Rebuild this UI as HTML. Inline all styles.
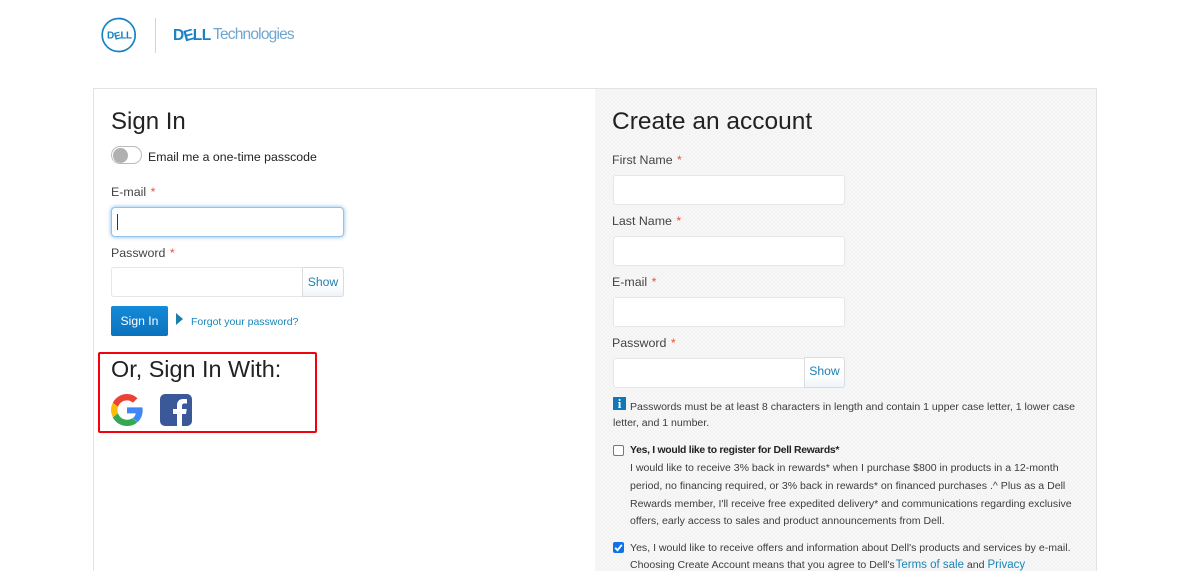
<!DOCTYPE html>
<html><head><meta charset="utf-8"><style>
html,body{margin:0;padding:0;background:#fff;width:1182px;height:571px;overflow:hidden}
body{position:relative;font-family:"Liberation Sans",sans-serif;color:#444}
.a{position:absolute;white-space:nowrap}
.h{font-size:24.5px;color:#222;line-height:30px}
.l{font-size:12.4px;line-height:16px;color:#444}
.l i{color:#e8553a;font-style:normal;margin-left:1px}
.s{font-size:10.56px;line-height:14px;color:#3d3d3d}
.in{position:absolute;background:#fff;border:1px solid #e6e6e6;border-radius:3px;box-sizing:border-box}
.show{position:absolute;box-sizing:border-box;border:1px solid #dcdcdc;border-radius:0 3px 3px 0;background:linear-gradient(#fff 60%,#eef4f9);color:#1f7fb5;font-size:12.2px;text-align:center}
a{color:#1a86b8;text-decoration:none}
</style></head><body>
<svg class="a" style="left:100px;top:16px" width="38" height="38" viewBox="0 0 38 38" font-family="Liberation Sans" font-weight="700" font-size="10" fill="#1782c5"><circle cx="18.7" cy="19" r="16.5" fill="none" stroke="#1782c5" stroke-width="1.7"/><text y="22.700" x="7">D</text><text x="14" y="23.200" transform="rotate(-15 17 19)">E</text><text y="22.700" x="20.500">L</text><text y="22.700" x="26">L</text></svg>
<div class="a" style="left:155px;top:18px;width:1px;height:35px;background:#d4d4d4"></div>
<svg class="a" style="left:170px;top:24px" width="46" height="22" font-family="Liberation Sans" font-weight="700" font-size="15.500" fill="#1782c5"><text y="16" x="3">D</text><text x="13.500" y="16.500" transform="rotate(-15 18 11)">E</text><text y="16" x="22.800">L</text><text y="16" x="31.800">L</text></svg>
<div class="a" style="left:213px;top:25px;font-size:15.5px;line-height:20px;color:#6fa6cf;letter-spacing:-.8px">Technologies</div>

<div class="a" style="left:93px;top:88px;width:1004px;height:490px;border:1px solid #e3e3e3;box-sizing:border-box"></div>
<div class="a" style="left:595px;top:89px;width:501px;height:482px;background:repeating-conic-gradient(#f3f3f3 0 25%,#f7f7f7 0 50%) 0 0/4px 4px"></div>

<div class="a h" style="left:111px;top:107px;font-size:24px">Sign In</div>
<div class="a" style="left:111px;top:146px;width:31px;height:18px;border:1px solid #bbb;border-radius:9px;box-sizing:border-box;background:#fff"></div>
<div class="a" style="left:113px;top:148px;width:15px;height:15px;border-radius:50%;background:#b0b0b0"></div>
<div class="a" style="left:148px;top:149px;font-size:12.3px;line-height:16px;color:#222">Email me a one-time passcode</div>
<div class="a l" style="left:111px;top:184px">E-mail <i>*</i></div>
<div class="a" style="left:111px;top:207px;width:233px;height:30px;box-sizing:border-box;background:#fff;border:1px solid #95c2ec;border-radius:4px;box-shadow:0 0 4px #7ab6ea"></div>
<div class="a" style="left:117px;top:214px;width:1px;height:16px;background:#333"></div>
<div class="a l" style="left:111px;top:245px">Password <i>*</i></div>
<div class="in" style="left:111px;top:267px;width:192px;height:30px;border-radius:3px 0 0 3px"></div>
<div class="show" style="left:302px;top:267px;width:42px;height:30px;line-height:29px">Show</div>
<div class="a" style="left:111px;top:306px;width:57px;height:30px;border-radius:2px;background:linear-gradient(#148ad8,#0b72bd);color:#fff;font-size:12.2px;line-height:30px;text-align:center">Sign In</div>
<svg class="a" style="left:176px;top:313px" width="8" height="12"><path d="M0 0L7 6L0 12Z" fill="#1b7fae"/></svg>
<a class="a" style="left:191px;top:315px;font-size:10.5px;line-height:14px">Forgot your password?</a>

<div class="a" style="left:98px;top:352px;width:219px;height:81px;box-sizing:border-box;border:2px solid #f5000f;border-radius:2px"></div>
<div class="a h" style="left:111px;top:354px;font-size:23.4px">Or, Sign In With:</div>
<svg class="a" style="left:111px;top:394px" width="32" height="32" viewBox="0 0 48 48">
<path fill="#ea4335" d="M24 9.500c3.900 0 6.900 1.600 9 3.600l6.700-6.700C35.600 2.600 30.300 0 24 0 14.600 0 6.600 5.400 2.700 13.200l7.800 6.100C12.400 13.500 17.700 9.500 24 9.500z"/>
<path fill="#4285f4" d="M47.500 24.500c0-1.600-.1-3.200-.4-4.500H24v9.100h13.200c-.6 3-2.300 5.500-4.800 7.200l7.600 5.900c4.500-4.100 7.500-10.300 7.500-17.700z"/>
<path fill="#fbbc05" d="M10.500 28.700c-.5-1.400-.8-3-.8-4.700s.3-3.300.8-4.700l-7.800-6.100C1 16.500 0 20.100 0 24s1 7.500 2.700 10.800z"/>
<path fill="#34a853" d="M24 48c6.300 0 11.700-2.100 15.600-5.700l-7.600-5.900c-2.100 1.400-4.800 2.300-8 2.300-6.300 0-11.600-4-13.500-9.800l-7.800 6.100C6.600 42.600 14.600 48 24 48z"/>
</svg>
<svg class="a" style="left:160px;top:394px" width="32" height="32" viewBox="0 0 32 32"><rect width="32" height="32" rx="5" fill="#3b5998"/><path fill="#fff" d="M22 32V20h4l.7-5H22v-3c0-1.500.6-2.500 2.600-2.500H27V5.200C26.500 5.100 25 5 23.200 5 19.500 5 17 7.200 17 11.400V15h-4v5h4v12z"/></svg>

<div class="a h" style="left:612px;top:107px">Create an account</div>
<div class="a l" style="left:612px;top:152px">First Name <i>*</i></div>
<div class="in" style="left:613px;top:175px;width:232px;height:30px"></div>
<div class="a l" style="left:612px;top:213px">Last Name <i>*</i></div>
<div class="in" style="left:613px;top:236px;width:232px;height:30px"></div>
<div class="a l" style="left:612px;top:274px">E-mail <i>*</i></div>
<div class="in" style="left:613px;top:297px;width:232px;height:30px"></div>
<div class="a l" style="left:612px;top:335px">Password <i>*</i></div>
<div class="in" style="left:613px;top:358px;width:192px;height:30px;border-radius:3px 0 0 3px"></div>
<div class="show" style="left:804px;top:357px;width:41px;height:31px;line-height:27px">Show</div>

<div class="a" style="left:613px;top:397px;width:13px;height:13px;background:#0f78b8;color:#fff;font:700 13px/13px 'Liberation Serif',serif;text-align:center">i</div>
<div class="a s" style="left:630px;top:400px">Passwords must be at least 8 characters in length and contain 1 upper case letter, 1 lower case</div>
<div class="a s" style="left:613px;top:416px">letter, and 1 number.</div>

<div class="a" style="left:613px;top:445px;width:11px;height:11px;box-sizing:border-box;border:1px solid #777;border-radius:2px;background:#fff"></div>
<div class="a s" style="left:630px;top:444px;font-size:10.4px;font-weight:700;color:#222;letter-spacing:-.28px">Yes, I would like to register for Dell Rewards*</div>
<div class="a s" style="left:630px;top:461px">I would like to receive 3% back in rewards* when I purchase $800 in products in a 12-month</div>
<div class="a s" style="left:630px;top:479px">period, no financing required, or 3% back in rewards* on financed purchases .^ Plus as a Dell</div>
<div class="a s" style="left:630px;top:497px">Rewards member, I'll receive free expedited delivery* and communications regarding exclusive</div>
<div class="a s" style="left:630px;top:514px">offers, early access to sales and product announcements from Dell.</div>

<svg class="a" style="left:613px;top:542px" width="11" height="11"><rect width="11" height="11" rx="2" fill="#0f72e5"/><path d="M2.200 5.800L4.500 8.200L8.800 2.800" fill="none" stroke="#fff" stroke-width="1.800"/></svg>
<div class="a s" style="left:630px;top:541px">Yes, I would like to receive offers and information about Dell's products and services by e-mail.</div>
<div class="a s" style="left:630px;top:558px"><span style="margin-right:-2px">Choosing Create Account means that you agree to Dell's </span><a style="font-size:11.5px">Terms of sale</a> and <a style="font-size:11.5px">Privacy</a></div>
</body></html>
